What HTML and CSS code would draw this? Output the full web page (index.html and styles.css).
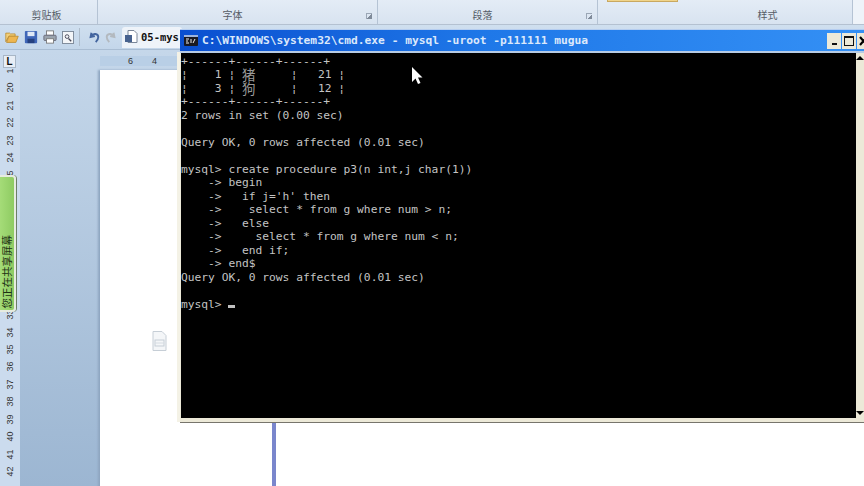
FILE: index.html
```html
<!DOCTYPE html>
<html lang="zh">
<head>
<meta charset="utf-8">
<title>cmd</title>
<link rel="stylesheet" href="styles.css">
</head>
<body>
<div class="ribbon">
  <div class="group g1"><span>剪贴板</span></div>
  <div class="group g2"><span>字体</span><i class="launcher"></i></div>
  <div class="group g3"><span>段落</span><i class="launcher"></i></div>
  <div class="group g4"><b class="gallery"></b><span>样式</span></div>
  <div class="group g5"></div>
</div>
<div class="qat">
  <svg class="qi" width="14" height="14" viewBox="0 0 18 18"><path d="M1 15V4h5l1 1h6v3H5L1 15z" fill="#f2cf7a" stroke="#b98a2c"/><path d="M2 16l3-8h12l-3 8z" fill="#eeb650" stroke="#b98a2c"/></svg>
  <svg class="qi" width="14" height="14" viewBox="0 0 16 16"><rect x="1" y="1" width="14" height="14" rx="1" fill="#3f66b8"/><rect x="4" y="2" width="8" height="5" fill="#dfe8f5"/><rect x="4" y="10" width="8" height="5" fill="#24407f"/></svg>
  <svg class="qi" width="14" height="14" viewBox="0 0 16 16"><rect x="4" y="1" width="8" height="5" fill="#fff" stroke="#777"/><rect x="1" y="6" width="14" height="6" rx="1" fill="#9aa3ad" stroke="#667"/><rect x="4" y="10" width="8" height="5" fill="#fff" stroke="#777"/></svg>
  <svg class="qi" width="12" height="13" viewBox="0 0 13 14"><rect x=".5" y=".5" width="12" height="13" fill="#f3f5f8" stroke="#7b8797"/><circle cx="5.500" cy="6" r="2" fill="none" stroke="#445"/><path d="M7 8l3 3" stroke="#445" stroke-width="1.400"/></svg>
  <i class="qsep"></i>
  <svg class="qi" width="12" height="14" viewBox="0 0 14 14"><path d="M4 2l-1 5 5-1M3.500 6C6 2 12 3 12 7c0 2-1 4-3 6" fill="none" stroke="#44659f" stroke-width="2.200"/></svg>
  <svg class="qi" width="12" height="14" viewBox="0 0 14 14"><path d="M10 2l1 5-5-1M10.500 6C8 2 2 3 2 7c0 2 1 4 3 6" fill="none" stroke="#b3b9bf" stroke-width="2.200"/></svg>
  <div class="doctab">
    <svg width="13" height="14" viewBox="0 0 13 14"><path d="M3 .5h6l3 3v9H3z" fill="#fff" stroke="#7a8698"/><rect x="0" y="5" width="7" height="7" fill="#47628f"/></svg>
    <span>05-mys</span>
  </div>
</div>
<div class="work">
  <div class="vruler">
    <div class="corner">L</div>
    <div class="ticks">
      <span>1</span><span>20</span><span>21</span><span>22</span><span>23</span><span>24</span><span>25</span><span>26</span><span>27</span><span>28</span><span>29</span><span>30</span><span>31</span><span>32</span><span>33</span><span>34</span><span>35</span><span>36</span><span>37</span><span>38</span><span>39</span><span>40</span><span>41</span><span>42</span>
    </div>
  </div>
  <div class="canvas">
    <div class="hruler"><span>6</span><span>4</span></div>
    <div class="page">
      <svg class="pageicon" width="15" height="20" viewBox="0 0 15 20"><path d="M1 .5h9l4 4v15H1z" fill="#f4f6f8" stroke="#c6ced6"/><rect x="3" y="9" width="9" height="6" fill="none" stroke="#c6ced6"/><path d="M3 12h9" stroke="#d6dce2"/></svg>
    </div>
  </div>
</div>
<div class="sharetab"><span>您正在共享屏幕</span></div>
<i class="margin-line"></i>
<section class="cmd">
  <header class="titlebar">
    <svg class="cmdicon" width="14" height="11" viewBox="0 0 14 11"><rect width="14" height="11" rx="1" fill="#1a1a22"/><rect width="14" height="2" fill="#9db4dd"/><path d="M2 4h3M2 6h2M2 8h3M7 4v4M9 8l2-4" stroke="#eee"/></svg>
    <span class="ttext">C:\WINDOWS\system32\cmd.exe - mysql -uroot -p111111 mugua</span>
    <span class="wbtn"><i class="min"></i></span>
    <span class="wbtn"><i class="max"></i></span>
    <span class="wbtn close"><svg width="13" height="16" viewBox="0 0 13 16"><path d="M3 4l7 8M10 4l-7 8" stroke="#000" stroke-width="2.200"/></svg></span>
  </header>
  <div class="cmdbody">
    <pre class="term">+------+------+------+
¦    1 ¦ <span class="cjk">猪</span>     ¦   21 ¦
¦    3 ¦ <span class="cjk">狗</span>     ¦   12 ¦
+------+------+------+
2 rows in set (0.00 sec)

Query OK, 0 rows affected (0.01 sec)

mysql&gt; create procedure p3(n int,j char(1))
    -&gt; begin
    -&gt;   if j='h' then
    -&gt;    select * from g where num &gt; n;
    -&gt;   else
    -&gt;     select * from g where num &lt; n;
    -&gt;   end if;
    -&gt; end$
Query OK, 0 rows affected (0.01 sec)

mysql&gt; <span class="caret"></span></pre>
    <div class="scroll">
      <span class="arrow up"></span>
      <span class="arrow down"></span>
    </div>
  </div>
</section>
<svg class="pointer" width="12" height="18" viewBox="0 0 12 18"><path d="M1 0v15l3.500-3.500L7 17l2.500-1L7 10.500h4.500z" fill="#fff"/></svg>
</body>
</html>
```
FILE: styles.css
```css
* { box-sizing: border-box; }
html, body { margin: 0; padding: 0; }
body { width: 864px; height: 486px; overflow: hidden; position: relative; background: #fff; font-family: "Noto Sans CJK SC", "Liberation Sans", sans-serif; }
i { display: block; }

.ribbon { display: flex; height: 25px; background: linear-gradient(#e4ecf6, #d8e3f0); border-bottom: 1px solid #b4c1d1; }
.group { position: relative; display: flex; align-items: flex-end; justify-content: center; padding-bottom: 2px; border-right: 1px solid #b5c3d4; font-size: 10px; line-height: 14px; color: #555c66; }
.g1 { width: 98px; padding-right: 4px; }
.g2 { width: 280px; padding-right: 10px; }
.g3 { width: 220px; padding-right: 10px; }
.g4 { width: 255px; padding-left: 85px; }
.g5 { flex: 1; border-right: 0; background: #eef3f9; }
.launcher { position: absolute; right: 5px; bottom: 5px; width: 6px; height: 6px; border: 1px solid #9aa6b5; border-width: 1px 0 0 1px; background: linear-gradient(135deg, transparent 50%, #7f8a99 50%); }
.gallery { position: absolute; top: 0; left: 9px; width: 71px; height: 2px; background: #f0d48a; border: 1px solid #c9a860; border-top: 0; }

.qat { display: flex; align-items: center; height: 25px; padding-left: 5px; gap: 5px; background: linear-gradient(#cfdfef, #c3d6ea); border-bottom: 1px solid #a9bdd3; }
.qsep { width: 1px; height: 18px; background: #aebccb; margin-right: 3px; }
.qi { flex: none; }
.doctab { display: flex; align-items: center; gap: 3px; height: 21px; width: 60px; padding-left: 3px; background: #eef3f9; border-radius: 3px 3px 0 0; font: bold 10.500px/1 "DejaVu Sans Mono", monospace; color: #111; white-space: nowrap; overflow: hidden; }

.work { display: flex; height: 436px; }
.vruler { width: 20px; flex: none; background: #cbdbee; padding-top: 5px; }
.corner { width: 13px; height: 13px; margin-left: 3px; border: 1px solid #a8b6c6; background: #e8eef6; font: bold 10px/11px "Liberation Sans", sans-serif; color: #111; text-align: center; }
.ticks { display: flex; flex-direction: column; margin-top: -6px; }
.ticks span { height: 17.450px; width: 20px; display: flex; align-items: center; justify-content: center; writing-mode: vertical-rl; text-orientation: sideways; transform: rotate(180deg); font: 9px/1 "Liberation Sans", sans-serif; color: #333; }
.canvas { flex: 1; padding: 6px 0 0 80px; background: linear-gradient(#c5d7ea, #9cb6d2); }
.hruler { height: 10px; margin-bottom: 4px; display: flex; gap: 19px; padding-left: 28px; background: #b9cfe6; font: 9px/10px "Liberation Sans", sans-serif; color: #333; }
.page { position: relative; height: 420px; background: #fff; box-shadow: -2px 0 2px #8ea6c0; }
.pageicon { position: absolute; left: 52px; top: 261px; }

.sharetab { position: absolute; left: 0; top: 175px; width: 16px; height: 137px; background: linear-gradient(90deg, #a5dc78, #8ecb62); border: 2px solid #e6ebe0; border-left: 0; border-radius: 0 4px 4px 0; box-shadow: 1px 0 0 #6d7f68; display: flex; align-items: flex-end; justify-content: center; padding-bottom: 2px; }
.sharetab span { writing-mode: vertical-rl; text-orientation: sideways; transform: rotate(180deg); font-size: 10.500px; line-height: 14px; color: #1c3013; white-space: nowrap; }

.margin-line { position: absolute; left: 272px; top: 422px; width: 4px; height: 64px; background: #7a86cc; }

.cmd { position: absolute; left: 180px; top: 29px; width: 684px; height: 394px; padding: 0 0 4px 1px; background: #ece9d8; border-bottom: 1px solid #77756c; border-top: 1px solid #b5cdf0; }
.cmd::before { content: ""; position: absolute; left: -3px; top: 22px; bottom: 0; width: 3px; background: #f4f2e6; }
.titlebar { display: flex; align-items: center; height: 23px; margin-left: -1px; padding-left: 4px; background: linear-gradient(90deg, #0a4fd0, #1f78e8 45%, #3490f5); border-bottom: 2px solid #b7cbe4; }
.cmdicon { flex: none; margin-right: 4px; }
.ttext { flex: 1; font: bold 11.250px/1 "DejaVu Sans Mono", monospace; color: #dbe8fb; white-space: pre; }
.wbtn { display: flex; align-items: center; justify-content: center; width: 14px; height: 16px; background: #ece9d8; flex: none; margin-left: 1px; overflow: hidden; }
.wbtn .min { width: 5px; height: 2px; background: #111; margin-top: 6px; }
.wbtn .max { width: 10px; height: 10px; border: 1px solid #111; border-top-width: 2px; }
.wbtn.close { width: 7px; justify-content: flex-start; }
.wbtn.close svg { flex: none; }
.cmdbody { display: flex; height: 365px; background: #000; }
.term { flex: 1; margin: 0; padding: 1.500px 0 0 0; background: #000; color: #c4c4c4; font: 11.250px/13.500px "DejaVu Sans Mono", monospace; overflow: hidden; white-space: pre; }
.cjk { display: inline-block; width: 2ch; font: 13.500px/13.500px "Noto Sans CJK SC", sans-serif; color: #9a9a9a; vertical-align: top; }
.caret { display: inline-block; width: 7px; height: 3px; background: #c0c0c0; }
.scroll { width: 8px; flex: none; background: #ece9d8; display: flex; flex-direction: column; justify-content: space-between; align-items: center; padding: 3px 0; }
.arrow { width: 0; height: 0; border: 4px solid transparent; }
.arrow.up { border-bottom-color: #000; border-top-width: 0; }
.arrow.down { border-top-color: #000; border-bottom-width: 0; }

.pointer { position: absolute; left: 411px; top: 67px; }
```
